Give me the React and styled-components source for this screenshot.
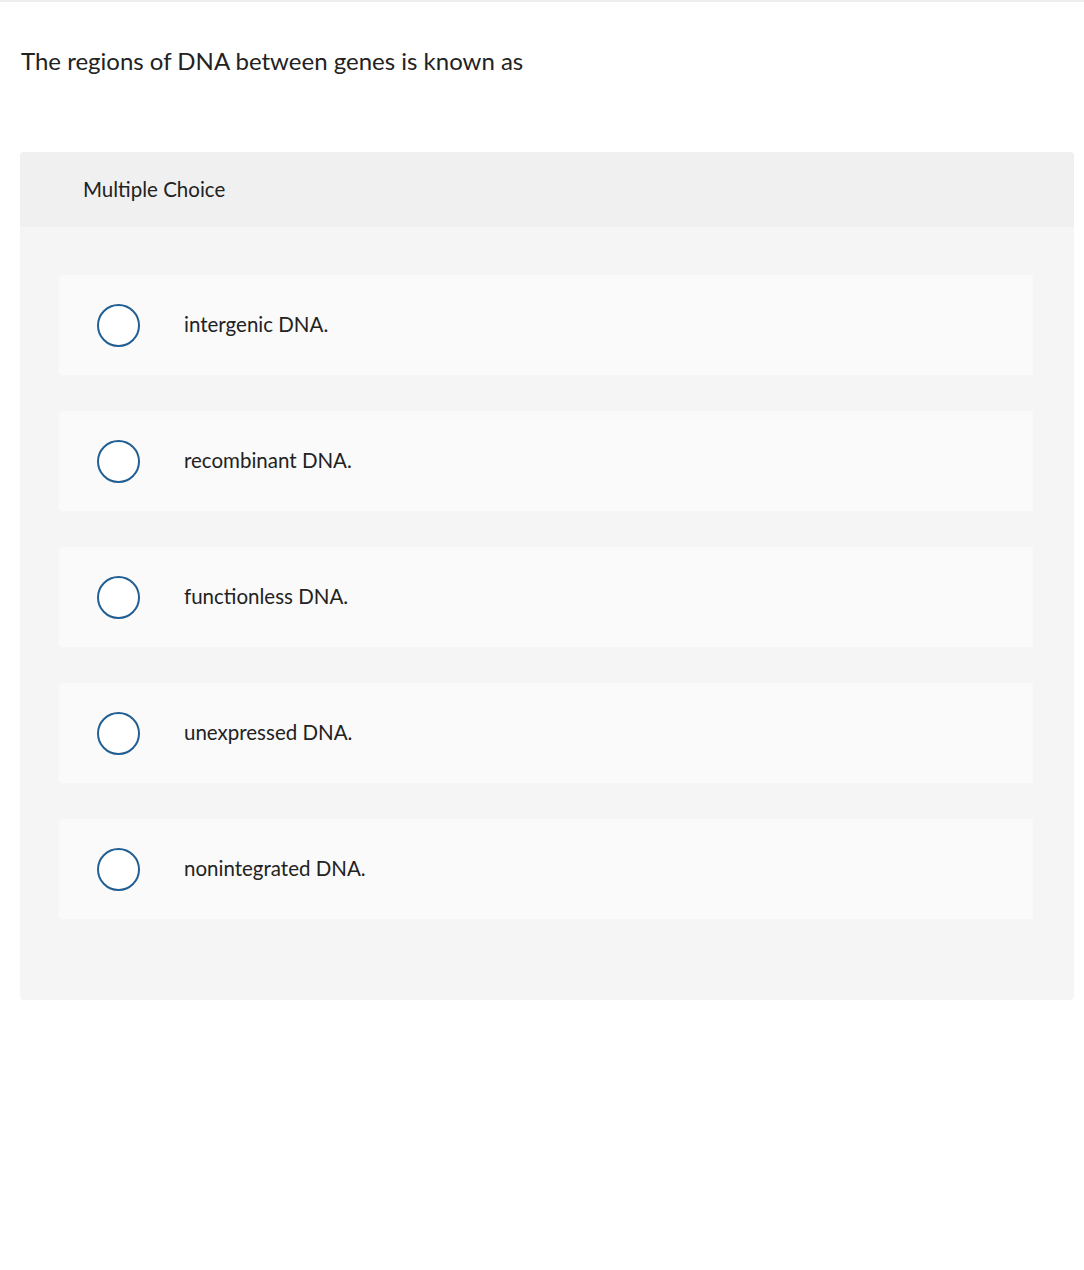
import React from "react";
import styled, { createGlobalStyle } from "styled-components";

const GlobalStyle = createGlobalStyle`
  body {
    margin: 0;
    background: #ffffff;
    font-family: Lato, "Liberation Sans", sans-serif;
    color: #222222;
  }
`;

const Page = styled.main`
  border-top: 2px solid #eeeeee;
  padding: 0 10px 0 20px;
`;

const Question = styled.p`
  margin: 0;
  padding: 43px 0 0 1px;
  font-size: 24px;
  line-height: 32px;
  height: 107px;
`;

const Panel = styled.section`
  background: #f5f5f5;
  border-radius: 4px;
  overflow: hidden;
`;

const PanelHeader = styled.header`
  background: #f0f0f0;
  height: 75px;
  display: flex;
  align-items: center;
  padding: 0 0 1px 63px;
  box-sizing: border-box;
  font-size: 20.5px;
`;

const Options = styled.div`
  display: flex;
  flex-direction: column;
  gap: 36px;
  padding: 48px 41px 81px 39px;
`;

const Option = styled.label`
  display: flex;
  align-items: center;
  height: 100px;
  background: #fafafa;
  border-radius: 4px;
  cursor: pointer;
`;

const Radio = styled.span`
  box-sizing: border-box;
  width: 43px;
  height: 43px;
  margin-left: 38px;
  border: 2px solid #235f92;
  border-radius: 50%;
  background: #ffffff;
  flex-shrink: 0;
`;

const OptionText = styled.span`
  margin: 0 0 3px 44px;
  font-size: 20.5px;
`;

const choices = [
  "intergenic DNA.",
  "recombinant DNA.",
  "functionless DNA.",
  "unexpressed DNA.",
  "nonintegrated DNA.",
];

export default function App() {
  return (
    <>
      <GlobalStyle />
      <Page>
        <Question>The regions of DNA between genes is known as</Question>
        <Panel>
          <PanelHeader>Multiple Choice</PanelHeader>
          <Options>
            {choices.map((c) => (
              <Option key={c}>
                <Radio />
                <OptionText>{c}</OptionText>
              </Option>
            ))}
          </Options>
        </Panel>
      </Page>
    </>
  );
}
